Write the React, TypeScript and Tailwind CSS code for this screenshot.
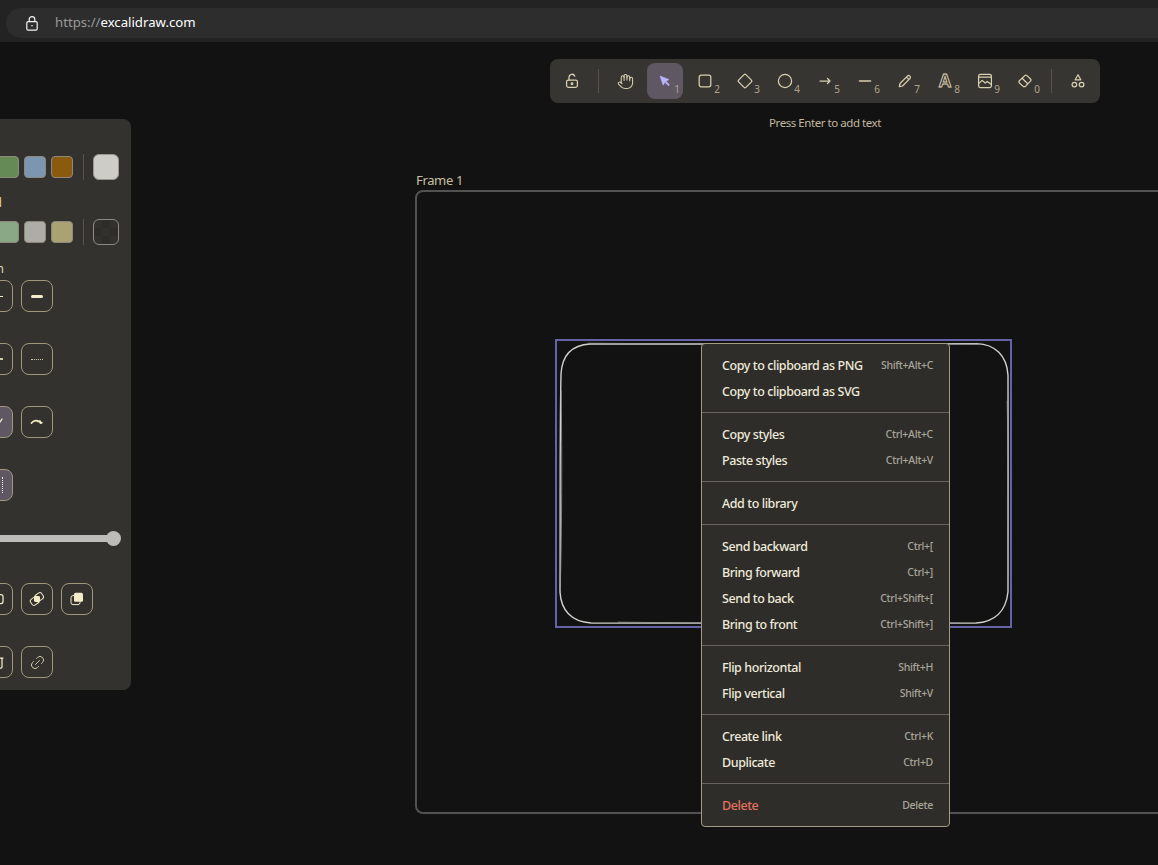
import type { ReactNode } from "react";
import { Hand, Link2 } from "lucide-react";

const font = { fontFamily: '"Noto Sans", sans-serif' };

function Svg({ children, size = 16, sw = 1.25 }: { children: ReactNode; size?: number; sw?: number }) {
  return (
    <svg width={size} height={size} viewBox="0 0 16 16" fill="none" stroke="currentColor" strokeWidth={sw} strokeLinecap="round" strokeLinejoin="round">
      {children}
    </svg>
  );
}

const tools: { key: string; num: string; icon: ReactNode; active?: boolean }[] = [
  {
    key: "select",
    num: "1",
    active: true,
    icon: (
      <svg width="16" height="16" viewBox="0 0 16 16">
        <path d="M3 3l9 3.6-3 1.6 3.4 3.6-1 1-3.5-3.6-1.7 3z" fill="#b8b4ff" stroke="#b8b4ff" strokeWidth="0.6" strokeLinejoin="round" />
      </svg>
    ),
  },
  { key: "rect", num: "2", icon: <Svg><rect x="2.2" y="2.2" width="11.6" height="11.6" rx="2" /></Svg> },
  { key: "diamond", num: "3", icon: <Svg><path d="M7.1 1.6a1.3 1.3 0 0 1 1.8 0l5.5 5.5a1.3 1.3 0 0 1 0 1.8l-5.5 5.5a1.3 1.3 0 0 1-1.8 0L1.6 8.9a1.3 1.3 0 0 1 0-1.8z" /></Svg> },
  { key: "circle", num: "4", icon: <Svg><circle cx="8" cy="8" r="6.6" /></Svg> },
  { key: "arrow", num: "5", icon: <Svg><path d="M3 8h10M10.5 5.5L13 8l-2.5 2.5" /></Svg> },
  { key: "line", num: "6", icon: <Svg sw={1.6}><path d="M2.5 8h11" /></Svg> },
  { key: "pencil", num: "7", icon: <Svg><path d="M2.3 13.7l.7-3.2 7.4-7.4a1.7 1.7 0 0 1 2.5 2.5l-7.4 7.4zM9.4 4.1l2.5 2.5" /></Svg> },
  {
    key: "text",
    num: "8",
    icon: <span className="text-[18px] leading-4 font-bold text-transparent [-webkit-text-stroke:0.85px_#e0d7b6] [font-family:'Liberation_Sans',sans-serif]">A</span>,
  },
  {
    key: "image",
    num: "9",
    icon: (
      <Svg>
        <rect x="1.6" y="1.4" width="12.8" height="13.2" rx="1.8" />
        <path d="M2 4.2h12M1.8 10.4l3.4-3 3 2.6 2-1.6 4.2 3" />
      </Svg>
    ),
  },
  {
    key: "eraser",
    num: "0",
    icon: (
      <Svg>
        <path d="M6.4 13.6L2.2 9.7a1.2 1.2 0 0 1 0-1.7l5.8-5.6a1.2 1.2 0 0 1 1.7 0l4 3.8a1.2 1.2 0 0 1 0 1.7l-5.5 5.7zM5.2 5.2l5 5" />
      </Svg>
    ),
  },
];

function ToolButton({ active, num, children }: { active?: boolean; num?: string; children: ReactNode }) {
  return (
    <div className={`relative flex h-9 w-9 items-center justify-center rounded-lg ${active ? "bg-[#5f5862] text-[#b8b4ff]" : "text-[#d9d0b0]"}`}>
      {children}
      {num && <span className="absolute right-[3px] bottom-[2px] text-[10px] leading-4 text-[#aca58e]">{num}</span>}
    </div>
  );
}

function Toolbar() {
  return (
    <div className="absolute top-[17px] left-[550px] flex h-11 w-[550px] items-center gap-1 rounded-lg bg-[#363531] p-1" style={font}>
      <ToolButton>
        <svg width="16" height="16" viewBox="0 0 16 16" fill="none" stroke="currentColor" strokeWidth="1.25" strokeLinecap="round" strokeLinejoin="round">
          <rect x="2.6" y="7" width="10.8" height="7.4" rx="1.8" />
          <circle cx="8" cy="10.7" r="0.8" />
          <path d="M5 7V4.2a3 3 0 0 1 5.8-1" />
        </svg>
      </ToolButton>
      <div className="mx-1 h-6 w-px bg-[#55534c]" />
      <ToolButton>
        <Hand size={17} strokeWidth={1.5} />
      </ToolButton>
      {tools.map((t) => (
        <ToolButton key={t.key} active={t.active} num={t.num}>
          {t.icon}
        </ToolButton>
      ))}
      <div className="mx-1 h-6 w-px bg-[#55534c]" />
      <ToolButton>
        <Svg>
          <path d="M8 1.8l2.8 5H5.2z" />
          <circle cx="4.4" cy="11.6" r="2.3" />
          <circle cx="11.6" cy="11.6" r="2.3" />
        </Svg>
      </ToolButton>
    </div>
  );
}

function Swatch({ color }: { color: string }) {
  return <div className="h-[22px] w-[22px] rounded-[4px] border border-[#8d8a7c]" style={{ backgroundColor: color }} />;
}

function OptionButton({ active, children }: { active?: boolean; children?: ReactNode }) {
  return (
    <div className={`flex h-8 w-8 shrink-0 items-center justify-center rounded-lg border border-[#a1977c] text-[#f4ecc8] ${active ? "bg-[#5f5862]" : ""}`}>
      {children}
    </div>
  );
}

function Panel() {
  return (
    <div className="absolute top-[77px] left-[-130px] flex h-[571px] w-[261px] flex-col rounded-lg bg-[#33322e] pt-[35px] text-[#e0d8b8]" style={font}>
      <div className="flex h-[26px] items-center">
        <div className="flex w-[203px] justify-end gap-[5px]">
          <Swatch color="#668a55" />
          <Swatch color="#7c96b2" />
          <Swatch color="#8a5a0e" />
        </div>
        <div className="mr-[9px] ml-[10px] h-[26px] w-px bg-[#55534c]" />
        <div className="h-[26px] w-[26px] rounded-[6px] border border-[#9a988e] bg-[#cdccc7]" />
      </div>
      <div className="mt-[15px] h-4 w-[132px] text-right text-xs leading-4">Background</div>
      <div className="mt-[8px] flex h-[26px] items-center">
        <div className="flex w-[203px] justify-end gap-[5px]">
          <Swatch color="#8aa885" />
          <Swatch color="#aeaca6" />
          <Swatch color="#aba274" />
        </div>
        <div className="mr-[9px] ml-[10px] h-[26px] w-px bg-[#55534c]" />
        <div className="h-[26px] w-[26px] rounded-[6px] border border-[#8d8b82] bg-[repeating-conic-gradient(#2e2d2a_0_25%,#32312d_0_50%)] bg-[length:16px_16px]" />
      </div>
      <div className="mt-[16px] h-4 w-[134px] text-right text-xs leading-4">Stroke width</div>
      <div className="mt-[3px] flex gap-2 pl-[111px]">
        <OptionButton>
          <span className="h-[1px] w-3 bg-current" />
        </OptionButton>
        <OptionButton>
          <span className="h-[3px] w-3 rounded-full bg-current" />
        </OptionButton>
      </div>
      <div className="mt-[31px] flex gap-2 pl-[111px]">
        <OptionButton>
          <span className="h-[2px] w-3 border-t-2 border-dashed border-[#cfc8aa]" />
        </OptionButton>
        <OptionButton>
          <span className="h-px w-3 border-t border-dotted border-[#cfc8aa]" />
        </OptionButton>
      </div>
      <div className="mt-[31px] flex gap-2 pl-[111px]">
        <OptionButton active>
          <Svg sw={1.4}>
            <path d="M2 10c2-4 3-4 5-2s3 2 6-3" />
          </Svg>
        </OptionButton>
        <OptionButton>
          <Svg sw={1.7}>
            <path d="M2.5 9c2-2.4 5-3 7.5-1.4M8.8 7.4l2.2-.4.4 2.2 1.4-.6" />
          </Svg>
        </OptionButton>
      </div>
      <div className="mt-[31px] flex gap-2 pl-[111px]">
        <OptionButton active>
          <span className="h-4 w-px translate-x-[5px] border-l border-dotted border-white" />
        </OptionButton>
      </div>
      <div className="relative mt-[29px] flex h-4 items-center pr-[18px]">
        <div className="h-[7px] w-full rounded-full bg-[#bdbcb8]" />
        <div className="absolute right-[10px] h-[15px] w-[15px] rounded-full bg-[#bdbcb8]" />
      </div>
      <div className="mt-[37px] flex gap-2 pl-[111px]">
        <OptionButton>
          <Svg><rect x="6" y="3.5" width="8" height="9" rx="2" /></Svg>
        </OptionButton>
        <OptionButton>
          <svg width="18" height="18" viewBox="0 0 18 18" fill="none" stroke="currentColor" strokeWidth="1">
            <rect x="2.6" y="7.6" width="8" height="7" rx="2.4" transform="rotate(-35 6.6 11)" />
            <rect x="7.2" y="3.4" width="8" height="7" rx="2.4" transform="rotate(-35 11.2 7)" />
            <rect x="6" y="6" width="6" height="6" rx="1.4" fill="currentColor" stroke="none" />
          </svg>
        </OptionButton>
        <OptionButton>
          <svg width="18" height="18" viewBox="0 0 18 18" fill="none" stroke="currentColor" strokeWidth="1">
            <rect x="3" y="5.6" width="9" height="9" rx="2" />
            <rect x="6" y="2.8" width="9" height="9" rx="1.6" fill="currentColor" stroke="none" />
          </svg>
        </OptionButton>
      </div>
      <div className="mt-[31px] flex gap-2 pl-[111px]">
        <OptionButton>
          <Svg><path d="M5 4h9M6 4v9a1 1 0 0 0 1 1h5a1 1 0 0 0 1-1V4" /></Svg>
        </OptionButton>
        <OptionButton>
          <Link2 size={17} strokeWidth={1.25} className="-rotate-45 text-[#d9d0b0]" />
        </OptionButton>
      </div>
    </div>
  );
}

const menuGroups: { label: string; keys?: string; danger?: boolean }[][] = [
  [{ label: "Copy to clipboard as PNG", keys: "Shift+Alt+C" }, { label: "Copy to clipboard as SVG" }],
  [{ label: "Copy styles", keys: "Ctrl+Alt+C" }, { label: "Paste styles", keys: "Ctrl+Alt+V" }],
  [{ label: "Add to library" }],
  [
    { label: "Send backward", keys: "Ctrl+[" },
    { label: "Bring forward", keys: "Ctrl+]" },
    { label: "Send to back", keys: "Ctrl+Shift+[" },
    { label: "Bring to front", keys: "Ctrl+Shift+]" },
  ],
  [{ label: "Flip horizontal", keys: "Shift+H" }, { label: "Flip vertical", keys: "Shift+V" }],
  [{ label: "Create link", keys: "Ctrl+K" }, { label: "Duplicate", keys: "Ctrl+D" }],
  [{ label: "Delete", keys: "Delete", danger: true }],
];

function ContextMenu() {
  return (
    <div className="absolute top-[301px] left-[701px] flex w-[249px] flex-col rounded-[4px] border border-[#a59b85] bg-[#2e2d29] py-2" style={font}>
      {menuGroups.map((group, i) => (
        <div key={i}>
          {i > 0 && <div className="my-2 h-px bg-[#66645c]" />}
          {group.map((item) => (
            <div key={item.label} className="flex h-[26px] items-center justify-between pt-[2px] pr-4 pl-5">
              <span className={`text-[12.5px] font-medium tracking-[-0.42px] ${item.danger ? "text-[#e5705f]" : "text-[#eeeadb]"}`}>{item.label}</span>
              {item.keys && <span className="text-[10.5px] font-medium tracking-[-0.3px] text-[#a8a59a]">{item.keys}</span>}
            </div>
          ))}
        </div>
      ))}
    </div>
  );
}

function Selection() {
  return (
    <div className="absolute top-[297px] left-[555px] h-[289px] w-[457px] border-2 border-[#6662a8]">
      <svg className="ml-px" width="452" height="284" viewBox="0 0 451 283" preserveAspectRatio="none" fill="none" stroke="#cfcfcb" strokeWidth="1.4" strokeLinecap="round">
        <path d="M32 3C140 2.6 300 3.4 418 2.6 436 3 448 15 449 34 449.6 100 448.6 190 449 250 447 269 436 280 417 281 300 281.6 140 280.6 33 281 13 280 3 268 2 250 2.4 190 1.6 100 3 33 4 14 14 4 32 3Z" />
        <path d="M30 2.2C150 3.4 310 2.2 420 3.2M448.2 60C449.6 130 448 200 449.4 240M60 280.2C200 281.8 330 280.2 400 281.2M2.4 240C4.2 170 3.8 100 3.2 50" strokeWidth="0.8" stroke="#9c9c98" />
      </svg>
    </div>
  );
}

export default function App() {
  return (
    <div className="flex h-[865px] w-[1158px] flex-col overflow-hidden bg-[#121212]">
      <div className="flex h-[42px] shrink-0 items-start bg-[#232323] pt-2 pl-[6px]">
        <div className="flex h-[30px] flex-1 items-center gap-[17px] rounded-l-[15px] bg-[#2d2d2d] pl-[20px]">
          <svg width="12" height="15" viewBox="0 0 12 15" fill="none" stroke="#f2f2f2" strokeWidth="1.2">
            <rect x="0.8" y="5.6" width="10.4" height="8.6" rx="1.4" />
            <path d="M3.2 5.6V3.4a2.8 2.8 0 0 1 5.6 0v2.2" />
            <circle cx="6" cy="9.8" r="0.8" fill="#f2f2f2" stroke="none" />
          </svg>
          <span className="text-[13.2px] text-[#9a9a9a]" style={font}>
            https://<span className="text-white">excalidraw.com</span>
          </span>
        </div>
      </div>
      <div className="relative flex-1">
        <div className="absolute top-[130px] left-[416px] text-[13px] leading-4 tracking-[-0.35px] text-[#c9bfa3]" style={font}>
          Frame 1
        </div>
        <div className="absolute top-[148px] left-[415px] h-[624px] w-[800px] rounded-lg border-2 border-[#525251]" />
        <Selection />
        <Toolbar />
        <div className="absolute top-[73px] left-[550px] w-[550px] text-center text-[11.5px] leading-4 tracking-[-0.45px] text-[#c2b9a0]" style={font}>
          Press Enter to add text
        </div>
        <Panel />
        <ContextMenu />
      </div>
    </div>
  );
}
